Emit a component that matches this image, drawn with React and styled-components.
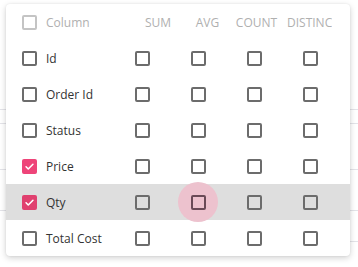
import React from 'react';
import styled, { createGlobalStyle, css } from 'styled-components';

const GlobalStyle = createGlobalStyle`
  html, body {
    margin: 0;
    padding: 0;
    background: #ffffff;
  }
  body {
    font-family: 'Open Sans', 'Liberation Sans', sans-serif;
    color: #333333;
  }
`;

const Page = styled.div`
  position: relative;
  width: 358px;
  height: 267px;
  overflow: hidden;
  background: #ffffff;
`;

const Backdrop = styled.div`
  display: flex;
  flex-direction: column;
  padding-top: 60px;
`;

const BackLine = styled.div`
  height: ${(props) => props.h}px;
  border-bottom: 1px solid #e3e3e8;
  margin-left: ${(props) => props.left || 0}px;
`;

const Panel = styled.div`
  position: absolute;
  left: 6px;
  top: 4px;
  width: 344px;
  height: 252px;
  background: #ffffff;
  border-radius: 4px;
  box-shadow: 0 2px 6px rgba(0, 0, 0, 0.18), 0 0 2px rgba(0, 0, 0, 0.08);
  overflow: hidden;
`;

const HeaderRow = styled.div`
  display: grid;
  grid-template-columns: 127px 50px 49px 49px 51px;
  height: 36px;
  align-items: center;
  color: #b0b0b0;
  font-size: 12px;
  text-transform: uppercase;
`;

const ColumnTitle = styled.div`
  display: flex;
  align-items: center;
  gap: 9px;
  padding-left: 16px;
  text-transform: none;
`;

const HeadCell = styled.div`
  white-space: nowrap;
  overflow: hidden;
  text-align: ${(props) => (props.left ? 'left' : 'center')};
  padding-left: ${(props) => (props.left ? '6px' : '0')};
`;

const Row = styled.div`
  display: grid;
  grid-template-columns: 108px repeat(4, 56px);
  height: 36px;
  align-items: center;
  background: ${(props) => (props.active ? '#dedede' : 'transparent')};
`;

const NameCell = styled.label`
  display: flex;
  align-items: center;
  gap: 9px;
  padding-left: 16px;
  font-size: 12px;
  color: #333333;
  white-space: nowrap;
`;

const BoxCell = styled.div`
  position: relative;
  display: flex;
  justify-content: center;
  align-items: center;
  height: 100%;
  ${(props) =>
    props.ripple &&
    css`
      &::before {
        content: '';
        position: absolute;
        width: 40px;
        height: 40px;
        border-radius: 50%;
        background: #edc2ce;
        left: 50%;
        top: 50%;
        transform: translate(-50%, -50%);
      }
    `}
`;

const Box = styled.span`
  position: relative;
  box-sizing: border-box;
  width: 15px;
  height: 15px;
  border-radius: 2px;
  border: 2px solid ${(props) => props.tone || '#6c6c6c'};
  display: inline-flex;
  align-items: center;
  justify-content: center;
  ${(props) =>
    props.checked &&
    css`
      border: none;
      background: ${props.fill || '#ee4479'};
    `}
`;

const Check = () => (
  <svg width="11" height="11" viewBox="0 0 24 24">
    <path
      d="M4.5 12.5l4.8 4.8L19.5 7"
      fill="none"
      stroke="#ffffff"
      strokeWidth="3.4"
      strokeLinecap="round"
      strokeLinejoin="round"
    />
  </svg>
);

const Checkbox = ({ checked, tone, fill }) => (
  <Box checked={checked} tone={tone} fill={fill}>
    {checked && <Check />}
  </Box>
);

const fields = [
  { name: 'Id' },
  { name: 'Order Id' },
  { name: 'Status' },
  { name: 'Price', checked: true },
  { name: 'Qty', checked: true, active: true, fill: '#e0406f' },
  { name: 'Total Cost' },
];

const aggregates = ['sum', 'avg', 'count', 'distinct'];

export default function App() {
  return (
    <Page>
      <GlobalStyle />
      <Backdrop>
        <BackLine h={49} />
        <BackLine h={13} />
        <BackLine h={45} />
        <BackLine h={40} />
        <BackLine h={30} left={350} />
      </Backdrop>
      <Panel>
        <HeaderRow>
          <ColumnTitle>
            <Checkbox tone="#c4c4c4" />
            Column
          </ColumnTitle>
          <HeadCell>Sum</HeadCell>
          <HeadCell>Avg</HeadCell>
          <HeadCell>Count</HeadCell>
          <HeadCell left>Distinct</HeadCell>
        </HeaderRow>
        {fields.map((f) => (
          <Row key={f.name} active={f.active}>
            <NameCell>
              <Checkbox checked={f.checked} fill={f.fill} />
              {f.name}
            </NameCell>
            {aggregates.map((a) => {
              const ripple = f.active && a === 'avg';
              return (
                <BoxCell key={a} ripple={ripple}>
                  <Checkbox tone={ripple ? '#6a4a57' : undefined} />
                </BoxCell>
              );
            })}
          </Row>
        ))}
      </Panel>
    </Page>
  );
}
